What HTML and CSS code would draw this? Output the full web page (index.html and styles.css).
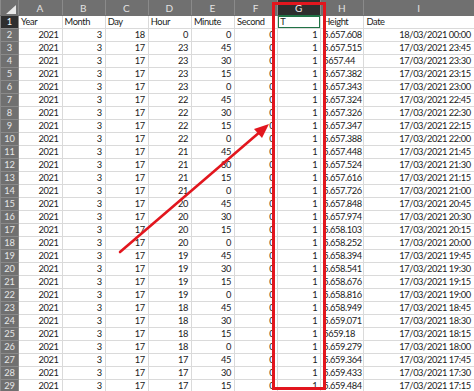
FILE: index.html
```html
<!DOCTYPE html>
<html>
<head>
<meta charset="utf-8">
<link rel="stylesheet" href="styles.css">
</head>
<body>
<div class="sheet">
<table class="grid">
<colgroup>
<col class="c-rh"><col class="c-a"><col class="c-std"><col class="c-std"><col class="c-std"><col class="c-std"><col class="c-std"><col class="c-std"><col class="c-std"><col class="c-i"><col class="c-j">
</colgroup>
<thead>
<tr class="hdr"><th class="corner"><span class="tri"></span></th><th>A</th><th>B</th><th>C</th><th>D</th><th>E</th><th>F</th><th class="sel">G</th><th>H</th><th>I</th><th></th></tr>
</thead>
<tbody>
<tr><th class="sel">1</th><td class="t">Year</td><td class="t">Month</td><td class="t">Day</td><td class="t">Hour</td><td class="t">Minute</td><td class="t">Second</td><td class="t active">T</td><td class="t">Height</td><td class="t">Date</td><td></td></tr>
<tr><th>2</th><td>2021</td><td>3</td><td>18</td><td>0</td><td>0</td><td>0</td><td>1</td><td class="t">5.657.608</td><td>18/03/2021 00:00</td><td></td></tr>
<tr><th>3</th><td>2021</td><td>3</td><td>17</td><td>23</td><td>45</td><td>0</td><td>1</td><td class="t">5.657.515</td><td>17/03/2021 23:45</td><td></td></tr>
<tr><th>4</th><td>2021</td><td>3</td><td>17</td><td>23</td><td>30</td><td>0</td><td>1</td><td class="t">5657.44</td><td>17/03/2021 23:30</td><td></td></tr>
<tr><th>5</th><td>2021</td><td>3</td><td>17</td><td>23</td><td>15</td><td>0</td><td>1</td><td class="t">5.657.382</td><td>17/03/2021 23:15</td><td></td></tr>
<tr><th>6</th><td>2021</td><td>3</td><td>17</td><td>23</td><td>0</td><td>0</td><td>1</td><td class="t">5.657.343</td><td>17/03/2021 23:00</td><td></td></tr>
<tr><th>7</th><td>2021</td><td>3</td><td>17</td><td>22</td><td>45</td><td>0</td><td>1</td><td class="t">5.657.324</td><td>17/03/2021 22:45</td><td></td></tr>
<tr><th>8</th><td>2021</td><td>3</td><td>17</td><td>22</td><td>30</td><td>0</td><td>1</td><td class="t">5.657.326</td><td>17/03/2021 22:30</td><td></td></tr>
<tr><th>9</th><td>2021</td><td>3</td><td>17</td><td>22</td><td>15</td><td>0</td><td>1</td><td class="t">5.657.347</td><td>17/03/2021 22:15</td><td></td></tr>
<tr><th>10</th><td>2021</td><td>3</td><td>17</td><td>22</td><td>0</td><td>0</td><td>1</td><td class="t">5.657.388</td><td>17/03/2021 22:00</td><td></td></tr>
<tr><th>11</th><td>2021</td><td>3</td><td>17</td><td>21</td><td>45</td><td>0</td><td>1</td><td class="t">5.657.448</td><td>17/03/2021 21:45</td><td></td></tr>
<tr><th>12</th><td>2021</td><td>3</td><td>17</td><td>21</td><td>30</td><td>0</td><td>1</td><td class="t">5.657.524</td><td>17/03/2021 21:30</td><td></td></tr>
<tr><th>13</th><td>2021</td><td>3</td><td>17</td><td>21</td><td>15</td><td>0</td><td>1</td><td class="t">5.657.616</td><td>17/03/2021 21:15</td><td></td></tr>
<tr><th>14</th><td>2021</td><td>3</td><td>17</td><td>21</td><td>0</td><td>0</td><td>1</td><td class="t">5.657.726</td><td>17/03/2021 21:00</td><td></td></tr>
<tr><th>15</th><td>2021</td><td>3</td><td>17</td><td>20</td><td>45</td><td>0</td><td>1</td><td class="t">5.657.848</td><td>17/03/2021 20:45</td><td></td></tr>
<tr><th>16</th><td>2021</td><td>3</td><td>17</td><td>20</td><td>30</td><td>0</td><td>1</td><td class="t">5.657.974</td><td>17/03/2021 20:30</td><td></td></tr>
<tr><th>17</th><td>2021</td><td>3</td><td>17</td><td>20</td><td>15</td><td>0</td><td>1</td><td class="t">5.658.103</td><td>17/03/2021 20:15</td><td></td></tr>
<tr><th>18</th><td>2021</td><td>3</td><td>17</td><td>20</td><td>0</td><td>0</td><td>1</td><td class="t">5.658.252</td><td>17/03/2021 20:00</td><td></td></tr>
<tr><th>19</th><td>2021</td><td>3</td><td>17</td><td>19</td><td>45</td><td>0</td><td>1</td><td class="t">5.658.394</td><td>17/03/2021 19:45</td><td></td></tr>
<tr><th>20</th><td>2021</td><td>3</td><td>17</td><td>19</td><td>30</td><td>0</td><td>1</td><td class="t">5.658.541</td><td>17/03/2021 19:30</td><td></td></tr>
<tr><th>21</th><td>2021</td><td>3</td><td>17</td><td>19</td><td>15</td><td>0</td><td>1</td><td class="t">5.658.676</td><td>17/03/2021 19:15</td><td></td></tr>
<tr><th>22</th><td>2021</td><td>3</td><td>17</td><td>19</td><td>0</td><td>0</td><td>1</td><td class="t">5.658.816</td><td>17/03/2021 19:00</td><td></td></tr>
<tr><th>23</th><td>2021</td><td>3</td><td>17</td><td>18</td><td>45</td><td>0</td><td>1</td><td class="t">5.658.949</td><td>17/03/2021 18:45</td><td></td></tr>
<tr><th>24</th><td>2021</td><td>3</td><td>17</td><td>18</td><td>30</td><td>0</td><td>1</td><td class="t">5.659.071</td><td>17/03/2021 18:30</td><td></td></tr>
<tr><th>25</th><td>2021</td><td>3</td><td>17</td><td>18</td><td>15</td><td>0</td><td>1</td><td class="t">5659.18</td><td>17/03/2021 18:15</td><td></td></tr>
<tr><th>26</th><td>2021</td><td>3</td><td>17</td><td>18</td><td>0</td><td>0</td><td>1</td><td class="t">5.659.279</td><td>17/03/2021 18:00</td><td></td></tr>
<tr><th>27</th><td>2021</td><td>3</td><td>17</td><td>17</td><td>45</td><td>0</td><td>1</td><td class="t">5.659.364</td><td>17/03/2021 17:45</td><td></td></tr>
<tr><th>28</th><td>2021</td><td>3</td><td>17</td><td>17</td><td>30</td><td>0</td><td>1</td><td class="t">5.659.433</td><td>17/03/2021 17:30</td><td></td></tr>
<tr><th>29</th><td>2021</td><td>3</td><td>17</td><td>17</td><td>15</td><td>0</td><td>1</td><td class="t">5.659.484</td><td>17/03/2021 17:15</td><td></td></tr>
</tbody>
</table>
<div class="highlight"></div>
<svg class="arrow" width="474" height="391" viewBox="0 0 474 391">
<line x1="120" y1="252" x2="261" y2="131" stroke="#e2161e" stroke-width="2.6" stroke-linecap="round"/>
<polygon points="269,124 254,129 262,138" fill="#e2161e"/>
</svg>
</div>
</body>
</html>
```
FILE: styles.css
```css
html, body {
  margin: 0;
  padding: 0;
  background: #ffffff;
  overflow: hidden;
}

.sheet {
  position: relative;
  width: 474px;
  height: 391px;
  overflow: hidden;
}

.grid {
  table-layout: fixed;
  border-collapse: collapse;
  width: 520px;
  font-family: Lato, "Liberation Sans", sans-serif;
  font-size: 9.3px;
  letter-spacing: -0.4px;
  color: #1a1a1a;
}

.c-rh { width: 18px; }
.c-a { width: 43.4px; }
.c-std { width: 43px; }
.c-i { width: 110px; }
.c-j { width: 45px; }

.grid td,
.grid th {
  padding: 0 3px 0 2px;
  height: 12.9px;
  line-height: 12px;
  white-space: nowrap;
  overflow: hidden;
  box-sizing: border-box;
}

.grid td {
  border: 1px solid #dadada;
  text-align: right;
}

.grid td.t {
  text-align: left;
}

.grid tbody th {
  background: #707070;
  color: #e6e6e6;
  font-weight: normal;
  text-align: center;
  border: 1px solid #8a8a8a;
  padding: 0;
  letter-spacing: 0;
}

.grid tbody th.sel {
  background: #2f2f2f;
  color: #ffffff;
}

.hdr th {
  height: 15.5px;
  background: #707070;
  color: #e2e2e2;
  font-weight: normal;
  text-align: center;
  border-left: 1px solid #8a8a8a;
  border-right: 1px solid #8a8a8a;
  border-bottom: 1px solid #707070;
  font-size: 10px;
  letter-spacing: 0;
}

.hdr th.sel {
  background: #2e2e2e;
  color: #f0f0f0;
  border-bottom: 1px solid #217346;
}

.hdr th.corner {
  position: relative;
  padding: 0;
}

.tri {
  position: absolute;
  right: 2px;
  bottom: 1px;
  width: 10px;
  height: 9px;
  background: #e8e8e8;
  clip-path: polygon(100% 0, 100% 100%, 0 100%);
}

.grid td.active {
  box-shadow: inset 0 0 0 1px #217346;
}

.highlight {
  position: absolute;
  left: 272px;
  top: 2px;
  width: 54px;
  height: 388px;
  border: 3px solid #e2161e;
  box-sizing: border-box;
}

.arrow {
  position: absolute;
  left: 0;
  top: 0;
}
```
